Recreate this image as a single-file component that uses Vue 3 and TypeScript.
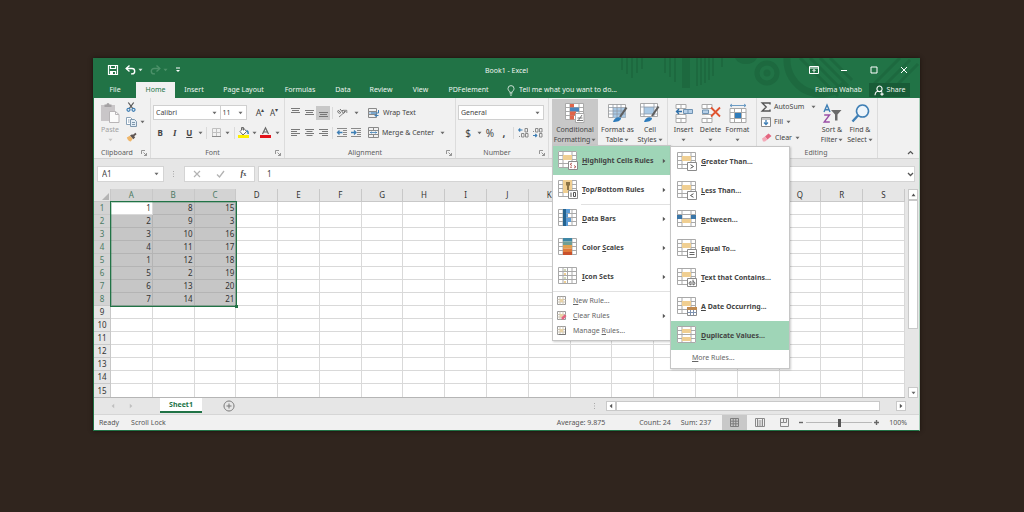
<script setup lang="ts">
import { h, ref, type FunctionalComponent } from 'vue'

interface Shape { d: string; f?: string; s?: string; w?: number; o?: number }
interface IconDef { w: number; h: number; p: Shape[] }
interface MenuEntry { icon: string; pre?: string; key: string; post: string; arrow?: boolean; active?: boolean; line?: boolean; small?: boolean }

const G = '#6b6b6b'
const L = '#a9a9a9'
const TAN = '#f0cf92'
const BLUE = '#3f7fb5'
const GRID = 'M.5.5h18v16h-18zM.5 4.5h18M.5 8.5h18M.5 12.5h18M5 .5v16M14 .5v16'
const base: Shape[] = [
  { d: 'M0 0h19v17H0z', f: '#fff' },
  { d: GRID, s: L },
  { d: 'M5 4h9v5H5z', f: TAN },
]
const badge: Shape = { d: 'M10.5 10.5h9v8h-9z', f: '#fff', s: '#8a8a8a' }
const tiny: Shape[] = [
  { d: 'M.5.5h8v8h-8z', f: '#fff', s: '#9a9a9a' },
  { d: 'M.5 3.5h8M.5 6h8M3 .5v8M6 .5v8', s: '#cfc6b4' },
  { d: 'M3 3h3v3H3z', f: '#e9d3a6' },
]

const icons: Record<string, IconDef> = {
  save: { w: 10, h: 10, p: [{ d: 'M.5.5h9v9h-9zM2.5.5v3h5v-3M2.5 9.5v-3h5v3', s: '#fff', w: 1.2 }, { d: 'M3 7h2v3H3z', f: '#fff' }] },
  undo: { w: 11, h: 10, p: [{ d: 'M1.5 3.5H7a2.6 2.6 0 0 1 0 5.4H6', s: '#fff', w: 1.4 }, { d: 'M4.5.5l-3.3 3 3.3 3', s: '#fff', w: 1.4 }] },
  redo: { w: 11, h: 10, p: [{ d: 'M9.5 3.5H4a2.6 2.6 0 0 0 0 5.4h1', s: '#4c9169', w: 1.4 }, { d: 'M6.5.5l3.3 3-3.3 3', s: '#4c9169', w: 1.4 }] },
  custom: { w: 6, h: 6, p: [{ d: 'M1 1h4', s: '#fff' }, { d: 'M1 3h4l-2 2z', f: '#fff' }] },
  ribbonopt: { w: 10, h: 8, p: [{ d: 'M.5.5h9v7h-9zM.5 2h9M5 6.5v-3M3.5 5L5 3.5 6.5 5', s: '#fff' }] },
  min: { w: 8, h: 8, p: [{ d: 'M1 4.5h6', s: '#fff' }] },
  max: { w: 8, h: 8, p: [{ d: 'M1 1h6v6H1z', s: '#fff' }] },
  close: { w: 8, h: 8, p: [{ d: 'M1 1l6 6M7 1L1 7', s: '#fff' }] },
  bulb: { w: 8, h: 11, p: [{ d: 'M2.7 7.3C2.6 6 1 5.500 1 3.600a3 3 0 0 1 6 0C7 5.500 5.400 6 5.300 7.300zM2.700 8.800h2.600M3.200 10.200h1.600', s: '#dcebe2', w: 0.9 }] },
  person: { w: 11, h: 11, p: [{ d: 'M5.500 1a2.600 2.800 0 1 0 .01 0zM1 10.200c.2-2.400 1.400-3.800 3-4M6.200 6.200c1 .2 1.500.5 2 1M8 7.500v3.200M6.400 9.100h3.200', s: '#fff', w: 1.1 }] },
  down: { w: 5, h: 4, p: [{ d: 'M.5.8h4L2.500 3.200z', f: '#6a6a6a' }] },
  downw: { w: 5, h: 4, p: [{ d: 'M.5.8h4L2.500 3.200z', f: '#dcebe2' }] },
  downd: { w: 5, h: 4, p: [{ d: 'M.5.8h4L2.500 3.200z', f: '#4c9169' }] },
  downl: { w: 5, h: 4, p: [{ d: 'M.5.8h4L2.500 3.200z', f: '#c4c4c4' }] },
  right: { w: 4, h: 6, p: [{ d: 'M.8.8v4.400L3.400 3z', f: '#555' }] },
  rightl: { w: 4, h: 6, p: [{ d: 'M.8.8v4.400L3.400 3z', f: '#c0c0c0' }] },
  left: { w: 4, h: 6, p: [{ d: 'M3.200.8v4.400L.6 3z', f: '#555' }] },
  leftl: { w: 4, h: 6, p: [{ d: 'M3.200.8v4.400L.6 3z', f: '#c0c0c0' }] },
  up: { w: 5, h: 4, p: [{ d: 'M.5 3.200h4L2.500.6z', f: '#555' }] },
  caret: { w: 7, h: 5, p: [{ d: 'M1 4l2.500-2.500L6 4', s: '#555', w: 1.2 }] },
  caretd: { w: 7, h: 5, p: [{ d: 'M1 1l2.500 2.500L6 1', s: '#555', w: 1.3 }] },
  launch: { w: 6, h: 6, p: [{ d: 'M.5 4V.5H4M2.500 2.500l3 3M5.500 3v2.500H3', s: '#8a8a8a', w: 0.9 }] },
  paste: { w: 20, h: 20, p: [{ d: 'M1 2h14v16H1z', f: '#c9c6c8' }, { d: 'M4.500 1.500h2a1.500 1.500 0 0 1 3 0h2V4h-7z', f: '#a5a2a4' }, { d: 'M9.500 8.500h6l3.500 3v8H9.500z', f: '#fbfbfb', s: '#b8b5b7' }, { d: 'M15.500 8.500v3H19', s: '#b8b5b7' }] },
  cut: { w: 10, h: 10, p: [{ d: 'M2.300.5l4.500 6.200M7.700.5L3.200 6.700', s: '#5a5a5a', w: 1.2 }, { d: 'M2.500 6.300a1.500 1.500 0 1 0 .01 0zM7.500 6.300a1.500 1.500 0 1 0 .01 0z', s: BLUE, w: 1.2 }] },
  copy: { w: 11, h: 10, p: [{ d: 'M.5.5h4l1.500 1.500v5.500h-5.500z', f: '#fff', s: '#8ba3b8' }, { d: 'M4.500 2.500h4l2 2v5h-6z', f: '#e3edf5', s: '#7f98ae' }, { d: 'M2 3h1.500M2 5h1.500M6 5.500h3M6 7.500h3', s: '#7f98ae' }] },
  brush: { w: 11, h: 9, p: [{ d: 'M.8 4.500l3-1.700 3 3-2 2.700c-1.600 0-3.200-1.200-4-4z', f: '#efb66a' }, { d: 'M4 2.500l2.200-1.200 3 3-1.800 2z', f: '#5f5654' }, { d: 'M7 3l3-2.500', s: '#5f5654', w: 1.800 }] },
  borders: { w: 9, h: 9, p: [{ d: 'M.5.5h8v8h-8zM.5 4.500h8M4.500.5v8', s: '#c0c0c0' }, { d: 'M0 8.500h9', s: '#8b8b8b' }] },
  bucket: { w: 11, h: 11, p: [{ d: 'M2 4.500L5.500 1l3 3.500L5 8z', f: '#fff', s: G }, { d: 'M3.500 3V.5h2v3', s: G }, { d: 'M8.500 3.500c2 1 1.800 2 1.700 3.500', s: BLUE, w: 1.500 }, { d: 'M0 8h11v3H0z', f: '#fdf100' }] },
  fontcolor: { w: 11, h: 11, p: [{ d: 'M2.500 7L5.500.8 8.500 7M3.600 5h3.800', s: '#666', w: 1.2 }, { d: 'M0 8h11v3H0z', f: '#e3121b' }] },
  atop: { w: 9, h: 9, p: [{ d: 'M0 .5h9M1 2.500h7M0 4.500h9', s: G, w: 0.9 }] },
  amid: { w: 9, h: 9, p: [{ d: 'M0 2.500h9M1 4.500h7M0 6.500h9', s: G, w: 0.9 }] },
  abot: { w: 9, h: 9, p: [{ d: 'M0 4.500h9M1 6.500h7M0 8.500h9', s: G, w: 0.9 }] },
  aleft: { w: 9, h: 9, p: [{ d: 'M0 1.500h9M0 3.500h6M0 5.500h9M0 7.500h6', s: G, w: 0.9 }] },
  acen: { w: 9, h: 9, p: [{ d: 'M0 1.500h9M1.500 3.500h6M0 5.500h9M1.500 7.500h6', s: G, w: 0.9 }] },
  aright: { w: 9, h: 9, p: [{ d: 'M0 1.500h9M3 3.500h6M0 5.500h9M3 7.500h6', s: G, w: 0.9 }] },
  orient: { w: 11, h: 10, p: [{ d: 'M2 9l7.500-6.500M7 2.300h2.800V5', s: '#8a8a8a' }, { d: 'M1.300 2.300a1.700 1.700 0 1 0 2.500 2.300zM3 1l3.500 4.300a1.500 1.500 0 1 0-1.500-2.500', s: G, w: 1 }] },
  indl: { w: 10, h: 9, p: [{ d: 'M0 .5h10M6 2.500h4M6 4.500h4M6 6.500h4M0 8.500h10', s: '#8a8a8a' }, { d: 'M5.500 4.500h-5M2.500 2.500l-2 2 2 2', s: BLUE, w: 1.3 }] },
  indr: { w: 10, h: 9, p: [{ d: 'M0 .5h10M6 2.500h4M6 4.500h4M6 6.500h4M0 8.500h10', s: '#8a8a8a' }, { d: 'M0 4.500h5M3 2.500l2 2-2 2', s: BLUE, w: 1.3 }] },
  wrap: { w: 12, h: 10, p: [{ d: 'M.5.5h8v9h-8zM.5 3.500h8M.5 6.500h8', s: '#8a8a8a' }, { d: 'M1 4h7v2H1z', f: '#b7cfe4' }, { d: 'M3 5h7.500V2M7 7.500h3.500M8.500 6L7 7.500 8.500 9', s: BLUE }] },
  merge: { w: 11, h: 11, p: [{ d: 'M.5.5h10v10H.5zM.5 3.500h10M.5 7.500h10M5.500.5v3M5.500 7.500v3', s: '#8a8a8a' }, { d: 'M2 5.500h7M3.500 4.500l-1 1 1 1M7.500 4.500l1 1-1 1', s: BLUE, w: 0.8 }] },
  decinc: { w: 11, h: 10, p: [{ d: 'M4.500 2H.8M2.200.5L.8 2l1.400 1.500', s: BLUE, w: 1.2 }, { d: 'M7 .5h2.500v3.500H7zM3.500 5.500H6V9H3.500zM7.500 5.500H10V9H7.500zM1 8.500h1', s: '#8a8a8a' }] },
  decdec: { w: 11, h: 10, p: [{ d: 'M1 7.500h3.700M3.300 6l1.400 1.500L3.300 9', s: BLUE, w: 1.2 }, { d: 'M3.500.5H6V4H3.500zM7.500.5H10V4H7.500zM7.500 5.500H10V9H7.500zM1 3.500h1', s: '#8a8a8a' }] },
  condfmt: { w: 20, h: 20, p: [{ d: 'M.5.5h18v16h-18z', f: '#fff', s: L }, { d: 'M.5 4.500h18M.5 8.500h18M.5 12.500h18M5 .5v16M14 .5v16', s: L }, { d: 'M5 1h4v3.500H5zM5 12.500h4v4H5z', f: '#e0654a' }, { d: 'M5 4.500h9v4H5z', f: '#4a86bd' }, { d: 'M5 8.500h6v4H5z', f: '#e0654a' }, { d: 'M10.500 10.500h8.500v9h-8.500z', f: '#fff', s: L }, { d: 'M12 17.500h6M12.500 15h5M13 18l4-6', s: '#777' }] },
  fmttable: { w: 20, h: 20, p: [{ d: 'M.5 1.500h17v13H.5z', f: '#fff', s: L }, { d: 'M5 5h12.500v9.500H5z', f: '#a9c9e5' }, { d: 'M.5 4.500h17M.5 8h17M.5 11h17M5 1.500v13M9 1.500v13M13 1.500v13', s: '#8f9ba6', w: 0.8 }, { d: 'M18.500 4.500L12 14', s: '#5f5f5f', w: 2.200 }, { d: 'M5 19c1-4 5-6 8-4 0 3-4 4-8 4z', f: '#2f7cbb' }] },
  cellstyle: { w: 20, h: 20, p: [{ d: 'M.5.5h17v13H.5z', f: '#fff', s: L }, { d: 'M4 4h10v7H4z', f: '#a9c9e5' }, { d: 'M.5 4h17M.5 11h17M4 .5v13M14 .5v13', s: '#8f9ba6', w: 0.8 }, { d: 'M18.500 3.500L12 13', s: '#5f5f5f', w: 2.200 }, { d: 'M4 19c1-4 5-6 8-4 0 3-4 4-8 4z', f: '#2f7cbb' }] },
  insert: { w: 18, h: 19, p: [{ d: 'M1 .5h10v4H1zM6 .5v4M1 14.500h10v4H1zM6 14.500v4M1 10.500h10v4', f: '#fff', s: L }, { d: 'M8.500 5.500h9v4h-9z', f: '#b7d0e8', s: '#6f93b3' }, { d: 'M13 5.500v4', s: '#6f93b3' }, { d: 'M7 7.500H1.500M4 5L1.500 7.500 4 10', s: '#2f6fa8', w: 1.400 }, { d: 'M1 10.500v4', s: L }] },
  del: { w: 20, h: 19, p: [{ d: 'M1 .5h10v4H1zM6 .5v4M1 14.500h10v4H1zM6 14.500v4M1 10.500h10v4', f: '#fff', s: L }, { d: 'M1.500 6h6v3.500h-6z', f: '#b7d0e8', s: '#6f93b3' }, { d: 'M10 3.500l9 9M19 3.500l-9 9', s: '#e0532f', w: 1.800 }] },
  format: { w: 18, h: 19, p: [{ d: 'M1 4.500h16v14H1zM1 8.500h16M1 14.500h16M5.500 4.500v14M12.500 4.500v14', f: '#fff', s: L }, { d: 'M6 9h6v5H6z', f: '#2f7cbb' }, { d: 'M1 1.500h16M3 0L1 1.500 3 3M15 0l2 1.500L15 3', s: '#5f93c0', w: 0.9 }] },
  sigma: { w: 10, h: 10, p: [{ d: 'M9 2.500V1H1.200l4 4-4 4H9V7.500', s: '#555', w: 1.400 }] },
  fill: { w: 10, h: 10, p: [{ d: 'M.5.5h9v9h-9z', f: '#fff', s: '#8a8a8a' }, { d: 'M.5 2h9', s: '#8a8a8a' }, { d: 'M5 3v4.500M3 5.500l2 2 2-2', s: BLUE, w: 1.300 }] },
  clear: { w: 11, h: 9, p: [{ d: 'M4 3.500L7.500.5l3 2.500L6.500 6.500z', f: '#e4657f' }, { d: 'M1 5.500l3-2L6.500 6.500 4 8.500H2z', f: '#f3a9b8' }] },
  sort: { w: 19, h: 19, p: [{ d: 'M1 8L4 1l3 7M2 5.700h4', s: '#3f7fb5', w: 1.400 }, { d: 'M1.200 11h5.300L1.200 18h5.600', s: '#9a4fa5', w: 1.400 }, { d: 'M8 6h10.500l-4 4.500v6h-2.500v-6z', f: '#6a6a6a' }] },
  find: { w: 19, h: 19, p: [{ d: 'M11.500 1a6 6 0 1 0 .01 0z', f: '#eef5fb', s: '#3f7fb5', w: 1.500 }, { d: 'M7 11.500L1.500 17.500', s: '#3f7fb5', w: 2.400 }] },
  cancel: { w: 8, h: 8, p: [{ d: 'M1 1l6 6M7 1L1 7', s: '#b3b3b3', w: 1.200 }] },
  check: { w: 9, h: 8, p: [{ d: 'M1 4.500l2.500 2.500L8 1', s: '#b3b3b3', w: 1.300 }] },
  plus: { w: 12, h: 12, p: [{ d: 'M6 1a5 5 0 1 0 .01 0zM3.500 6h5M6 3.500v5', s: '#777' }] },
  dots: { w: 3, h: 8, p: [{ d: 'M1 1h1v1H1zM1 3.500h1v1H1zM1 6h1v1H1z', f: '#aaa' }] },
  vnormal: { w: 9, h: 9, p: [{ d: 'M.5.5h8v8h-8zM.5 3.200h8M.5 5.800h8M3.200.5v8M5.800.5v8', s: '#7d7d7d' }] },
  vlayout: { w: 10, h: 9, p: [{ d: 'M.5.5h9v8h-9zM2.500 1v7M7.500 1v7M3.500 3h3M3.500 5h3M3.500 7h3', s: '#8a8a8a' }] },
  vbreak: { w: 9, h: 9, p: [{ d: 'M.5.5h8v8h-8zM3.500.5v4h3v-4M.5 4.500h3', s: '#8a8a8a' }] },
  zplus: { w: 7, h: 7, p: [{ d: 'M1 3.500h5M3.500 1v5', s: '#666', w: 1.400 }] },
  zminus: { w: 7, h: 7, p: [{ d: 'M1 3.500h4', s: '#666', w: 1.400 }] },
  highlight: { w: 20, h: 19, p: [...base, badge, { d: 'M14 12l-2 1.300 2 1.300M12 16.200h2M16 14.500l2 1.300-2 1.300', s: '#b0524e', w: 0.9 }] },
  gt: { w: 20, h: 19, p: [...base, badge, { d: 'M13.500 12.700l3 1.800-3 1.800', s: '#555' }] },
  lt: { w: 20, h: 19, p: [...base, badge, { d: 'M16.500 12.700l-3 1.800 3 1.800', s: '#555' }] },
  between: { w: 20, h: 19, p: [{ d: 'M0 0h19v17H0z', f: '#fff' }, { d: GRID, s: L }, { d: 'M0 5h5v4H0zM14 5h5v4h-5z', f: '#3a76a8' }, { d: 'M5 9h9v4H5z', f: TAN }] },
  eq: { w: 20, h: 19, p: [...base, badge, { d: 'M12.500 13.500h5M12.500 15.500h5', s: '#666' }] },
  ab: { w: 20, h: 19, p: [...base, badge, { d: 'M14 13.500v3.500M14 14a1.200 1.500 0 1 0 0 2.500M16 11.700v5.300M16 14a1.200 1.500 0 1 1 0 2.500', s: '#555', w: 0.9 }] },
  date: { w: 20, h: 19, p: [...base, badge, { d: 'M10 10h10v3H10z', f: '#c08a50' }, { d: 'M10.500 15.500h9M13.500 13v5.500M16.500 13v5.500', s: '#7f93b0' }] },
  dup: { w: 20, h: 19, p: [{ d: 'M0 0h19v17H0z', f: '#fff' }, { d: GRID, s: L }, { d: 'M5 3h9v4H5zM5 11h9v4H5z', f: TAN }] },
  top10: { w: 20, h: 19, p: [{ d: 'M0 0h19v17H0z', f: '#fff' }, { d: GRID, s: L }, { d: 'M5 0h9v13H5z', f: '#f0cf92' }, { d: 'M8 2h4v3l-1 1v4H9V6L8 5z', f: '#8a7244' }, badge, { d: 'M13 12.500v4.500M15.500 12.500h2v4h-2z', s: '#555' }] },
  bars: { w: 20, h: 19, p: [{ d: 'M0 0h19v17H0z', f: '#fff' }, { d: GRID, s: L }, { d: 'M5 0h3v17H5z', f: '#23628f' }, { d: 'M8 0h4v4H8zM8 4.500h2v4H8zM8 9h5v4H8zM8 13h2v4H8z', f: '#5b9bd5' }] },
  scales: { w: 20, h: 19, p: [{ d: 'M0 0h19v17H0z', f: '#fff' }, { d: GRID, s: L }, { d: 'M5 0h9v3.500H5z', f: '#3f87a5' }, { d: 'M5 3.500h9V7H5z', f: '#6f9e94' }, { d: 'M5 7h9v3.500H5z', f: '#e0a050' }, { d: 'M5 10.500h9V14H5z', f: '#e07a3a' }, { d: 'M5 14h9v3H5z', f: '#c9512c' }] },
  sets: { w: 20, h: 19, p: [{ d: 'M0 0h19v17H0z', f: '#fff' }, { d: GRID, s: L }, { d: 'M9.500.5v16', s: L }, { d: 'M6 2h2v2H6zM6 10h2v2H6z', f: '#cfd8b8' }, { d: 'M6 6h2v2H6zM6 14h2v2H6z', f: '#f0cf92' }] },
  newrule: { w: 9, h: 9, p: tiny },
  clearrule: { w: 10, h: 9, p: [...tiny, { d: 'M4 7l3.500-3.500L9.500 5 6 9z', f: '#e4657f' }] },
  managerule: { w: 9, h: 9, p: [...tiny, { d: 'M2 8.500h6.500V2', s: '#777' }] },
}

const Icon: FunctionalComponent<{ n: string }> = (props) => {
  const i = icons[props.n]
  return h('svg', { width: i.w, height: i.h, viewBox: `0 0 ${i.w} ${i.h}`, 'aria-hidden': 'true', style: { display: 'block', flex: 'none', overflow: 'visible' } },
    i.p.map((s) => h('path', { d: s.d, fill: s.f ?? 'none', stroke: s.s ?? 'none', 'stroke-width': s.w ?? 1, opacity: s.o ?? 1 })))
}
Icon.props = ['n']

const tabs = [
  { t: 'File', w: 42 }, { t: 'Home', w: 39, on: true }, { t: 'Insert', w: 38 }, { t: 'Page Layout', w: 61 },
  { t: 'Formulas', w: 52 }, { t: 'Data', w: 34 }, { t: 'Review', w: 42 }, { t: 'View', w: 37 }, { t: 'PDFelement', w: 59 },
]

const menu: MenuEntry[] = [
  { icon: 'highlight', key: 'H', post: 'ighlight Cells Rules', arrow: true, active: true },
  { icon: 'top10', key: 'T', post: 'op/Bottom Rules', arrow: true },
  { icon: 'bars', key: 'D', post: 'ata Bars', arrow: true, line: true },
  { icon: 'scales', pre: 'Color ', key: 'S', post: 'cales', arrow: true },
  { icon: 'sets', key: 'I', post: 'con Sets', arrow: true },
  { icon: 'newrule', key: 'N', post: 'ew Rule...', small: true, line: true },
  { icon: 'clearrule', key: 'C', post: 'lear Rules', small: true, arrow: true },
  { icon: 'managerule', pre: 'Manage ', key: 'R', post: 'ules...', small: true },
]
const submenu: MenuEntry[] = [
  { icon: 'gt', key: 'G', post: 'reater Than...' },
  { icon: 'lt', key: 'L', post: 'ess Than...' },
  { icon: 'between', key: 'B', post: 'etween...' },
  { icon: 'eq', key: 'E', post: 'qual To...' },
  { icon: 'ab', key: 'T', post: 'ext that Contains...' },
  { icon: 'date', key: 'A', post: ' Date Occurring...' },
  { icon: 'dup', key: 'D', post: 'uplicate Values...', active: true },
  { icon: '', key: 'M', post: 'ore Rules...', small: true },
]

const cols = 'ABCDEFGHIJKLMNOPQRS'.split('')
const values: number[][] = [[1, 8, 15], [2, 9, 3], [3, 10, 16], [4, 11, 17], [1, 12, 18], [5, 2, 19], [6, 13, 20], [7, 14, 21]]
const cell = (r: number, c: number): string => String(values[r - 1]?.[c] ?? '')
const selected = (r: number, c: number): boolean => r <= 8 && c < 3 && !(r === 1 && c === 0)

const font = ref('Calibri')
const size = ref('11')
const numberFormat = ref('General')
const formula = ref('1')
const nameBox = ref('A1')
const tell = ref('')
const zoom = ref(50)
</script>

<template>
  <main class="desk">
    <div class="window">
      <header class="head">
        <svg class="pattern" width="310" height="40" viewBox="0 0 310 40" aria-hidden="true">
          <g stroke="#1d693f" fill="none">
            <path d="M12 0v12M17 0v16M22 0v20M27 0v15M32 0v11M55 0v15M60 0v19M65 0v24" stroke-width="2" />
            <path d="M76 0v30" stroke-width="8" />
            <path d="M87 0v28M91 0v27M95 0v25M99 0v22M103 0v18M112 0v9" stroke-width="2" />
            <circle cx="157" cy="15" r="10" stroke-width="5" /><circle cx="157" cy="15" r="2" stroke-width="3" />
            <path d="M125 0a12 10 0 0 0 22 0" fill="#1d693f" stroke="none" />
            <path d="M177 0a34 34 0 0 0 58 26" stroke-width="7" />
            <path d="M190 0l38 38M200 0l34 34M210 0l28 28M220 0l22 22M268 34l32-32M278 36l30-30M262 28l28-28" stroke-width="3" />
          </g>
        </svg>
        <div class="title">
          <div class="quick">
            <button aria-label="Save"><Icon n="save" /></button>
            <button aria-label="Undo"><Icon n="undo" /><Icon n="downw" /></button>
            <button aria-label="Redo"><Icon n="redo" /><Icon n="downd" /></button>
            <button aria-label="Customize toolbar"><Icon n="custom" /></button>
          </div>
          <h1>Book1 - Excel</h1>
          <div class="wbtns">
            <button aria-label="Ribbon options"><Icon n="ribbonopt" /></button>
            <button aria-label="Minimize"><Icon n="min" /></button>
            <button aria-label="Maximize"><Icon n="max" /></button>
            <button aria-label="Close"><Icon n="close" /></button>
          </div>
        </div>
        <nav class="tabs">
          <button v-for="t in tabs" :key="t.t" class="tab" :class="{ on: t.on }" :style="{ width: t.w + 'px' }">{{ t.t }}</button>
          <label class="tell"><Icon n="bulb" /><input v-model="tell" aria-label="Tell me" placeholder="Tell me what you want to do..." /></label>
          <span class="user">Fatima Wahab</span>
          <button class="share"><Icon n="person" />Share</button>
        </nav>
      </header>

      <section class="ribbon">
        <div class="group clip">
          <div class="body">
            <button class="big paste"><Icon n="paste" /><span>Paste</span><Icon n="downl" /></button>
            <div class="stack">
              <button aria-label="Cut"><Icon n="cut" /></button>
              <button aria-label="Copy"><Icon n="copy" /><Icon n="down" /></button>
              <button aria-label="Format painter"><Icon n="brush" /></button>
            </div>
          </div>
          <footer><span>Clipboard</span><Icon n="launch" /></footer>
        </div>

        <div class="group fontg">
          <div class="rows">
            <div class="row">
              <span class="sel s1"><select v-model="font" aria-label="Font"><option>Calibri</option></select><Icon n="down" /></span>
              <span class="sel s2"><select v-model="size" aria-label="Font size"><option>11</option></select><Icon n="down" /></span>
              <button class="t grow">A<sup>▴</sup></button>
              <button class="t shrink">A<sup>▾</sup></button>
            </div>
            <div class="row">
              <button class="t"><b>B</b></button>
              <button class="t"><i>I</i></button>
              <button class="t"><b><u>U</u></b></button>
              <button class="a" aria-label="Underline options"><Icon n="down" /></button>
              <hr />
              <button class="t" aria-label="Borders"><Icon n="borders" /></button>
              <button class="a" aria-label="Border options"><Icon n="down" /></button>
              <hr />
              <button class="t" aria-label="Fill color"><Icon n="bucket" /></button>
              <button class="a" aria-label="Fill options"><Icon n="down" /></button>
              <button class="t" aria-label="Font color"><Icon n="fontcolor" /></button>
              <button class="a" aria-label="Color options"><Icon n="down" /></button>
            </div>
          </div>
          <footer><span>Font</span><Icon n="launch" /></footer>
        </div>

        <div class="group align">
          <div class="rows">
            <div class="row">
              <button class="t" aria-label="Top align"><Icon n="atop" /></button>
              <button class="t" aria-label="Middle align"><Icon n="amid" /></button>
              <button class="t pressed" aria-label="Bottom align"><Icon n="abot" /></button>
              <hr />
              <button class="t" aria-label="Orientation"><Icon n="orient" /></button>
              <button class="a wide" aria-label="Orientation options"><Icon n="down" /></button>
              <button class="lbl"><Icon n="wrap" />Wrap Text</button>
            </div>
            <div class="row">
              <button class="t" aria-label="Align left"><Icon n="aleft" /></button>
              <button class="t" aria-label="Center"><Icon n="acen" /></button>
              <button class="t" aria-label="Align right"><Icon n="aright" /></button>
              <hr />
              <button class="t" aria-label="Decrease indent"><Icon n="indl" /></button>
              <button class="t ind" aria-label="Increase indent"><Icon n="indr" /></button>
              <button class="lbl"><Icon n="merge" />Merge &amp; Center</button>
              <button class="a" aria-label="Merge options"><Icon n="down" /></button>
            </div>
          </div>
          <footer><span>Alignment</span><Icon n="launch" /></footer>
        </div>

        <div class="group num">
          <div class="rows">
            <div class="row">
              <span class="sel s3"><select v-model="numberFormat" aria-label="Number format"><option>General</option></select><Icon n="down" /></span>
            </div>
            <div class="row">
              <button class="t sym">$</button>
              <button class="a" aria-label="Currency options"><Icon n="down" /></button>
              <button class="t sym">%</button>
              <button class="t sym"><b>,</b></button>
              <hr />
              <button class="t" aria-label="Increase decimal"><Icon n="decinc" /></button>
              <button class="t" aria-label="Decrease decimal"><Icon n="decdec" /></button>
            </div>
          </div>
          <footer><span>Number</span><Icon n="launch" /></footer>
        </div>

        <div class="group styles">
          <div class="body">
            <div class="anchor">
              <button class="big cond pressed"><Icon n="condfmt" /><span>Conditional</span><span class="dd">Formatting<Icon n="down" /></span></button>
              <div class="menu" role="menu">
                <template v-for="m in menu" :key="m.post">
                  <hr v-if="m.line" :class="{ full: m.small }" />
                  <button class="item" role="menuitem" :class="{ active: m.active, small: m.small }">
                    <span class="ic"><Icon :n="m.icon" /></span>
                    <span>{{ m.pre }}<u>{{ m.key }}</u>{{ m.post }}</span>
                    <Icon v-if="m.arrow" class="arr" n="right" />
                  </button>
                </template>
                <div class="menu sub" role="menu">
                  <button v-for="m in submenu" :key="m.post" class="item" role="menuitem" :class="{ active: m.active, small: m.small }">
                    <span class="ic"><Icon v-if="m.icon" :n="m.icon" /></span>
                    <span><u>{{ m.key }}</u>{{ m.post }}</span>
                  </button>
                </div>
              </div>
            </div>
            <button class="big fat"><Icon n="fmttable" /><span>Format as</span><span class="dd">Table<Icon n="down" /></span></button>
            <button class="big cst"><Icon n="cellstyle" /><span>Cell</span><span class="dd">Styles<Icon n="down" /></span></button>
          </div>
        </div>

        <div class="group cells">
          <div class="body">
            <button class="big"><Icon n="insert" /><span>Insert</span><Icon n="down" /></button>
            <button class="big"><Icon n="del" /><span>Delete</span><Icon n="down" /></button>
            <button class="big"><Icon n="format" /><span>Format</span><Icon n="down" /></button>
          </div>
        </div>

        <div class="group edit">
          <div class="body">
            <div class="stack">
              <button><Icon n="sigma" />AutoSum<Icon class="push" n="down" /></button>
              <button><Icon n="fill" />Fill<Icon n="down" /></button>
              <button><Icon n="clear" />Clear<Icon n="down" /></button>
            </div>
            <button class="big"><Icon n="sort" /><span>Sort &amp;</span><span class="dd">Filter<Icon n="down" /></span></button>
            <button class="big"><Icon n="find" /><span>Find &amp;</span><span class="dd">Select<Icon n="down" /></span></button>
          </div>
          <footer><span>Editing</span></footer>
        </div>
        <button class="collapse" aria-label="Collapse ribbon"><Icon n="caret" /></button>
      </section>

      <section class="fbar">
        <label class="box name"><input v-model="nameBox" aria-label="Name box" /><Icon n="down" /></label>
        <Icon n="dots" />
        <div class="box ops">
          <button aria-label="Cancel"><Icon n="cancel" /></button>
          <button aria-label="Enter"><Icon n="check" /></button>
          <button class="fx" aria-label="Insert function"><i>f</i><sub>x</sub></button>
        </div>
        <label class="box val"><input v-model="formula" aria-label="Formula" /><Icon n="caretd" /></label>
      </section>

      <section class="sheet">
        <div class="gridwrap">
          <table>
            <thead>
              <tr>
                <th class="corner"><svg width="9" height="8" viewBox="0 0 9 8" aria-hidden="true"><path d="M8 0v7H1z" fill="#b4b4b4" /></svg></th>
                <th v-for="(c, i) in cols" :key="c" :class="{ hot: i < 3 }">{{ c }}</th>
              </tr>
            </thead>
            <tbody>
              <tr v-for="r in 15" :key="r">
                <th :class="{ hot: r < 9 }">{{ r }}</th>
                <td v-for="(c, i) in cols" :key="c" :class="{ picked: selected(r, i) }">{{ cell(r, i) }}</td>
              </tr>
            </tbody>
          </table>
          <div class="range"></div>
        </div>
        <div class="vbar">
          <button aria-label="Scroll up"><Icon n="up" /></button>
          <div class="thumb"></div>
          <button aria-label="Scroll down"><Icon n="down" /></button>
        </div>
      </section>

      <section class="sheets">
        <button aria-label="Previous sheet"><Icon n="leftl" /></button>
        <button aria-label="Next sheet"><Icon n="rightl" /></button>
        <button class="stab">Sheet1</button>
        <button aria-label="New sheet"><Icon n="plus" /></button>
        <div class="hbar">
          <Icon n="dots" />
          <button aria-label="Scroll left"><Icon n="left" /></button>
          <div class="thumb"></div>
          <button class="end" aria-label="Scroll right"><Icon n="right" /></button>
        </div>
      </section>

      <footer class="status">
        <span class="ready">Ready</span><span>Scroll Lock</span>
        <span class="avg">Average: 9.875</span><span class="cnt">Count: 24</span><span class="sum">Sum: 237</span>
        <button class="pressed" aria-label="Normal view"><Icon n="vnormal" /></button>
        <button aria-label="Page layout view"><Icon n="vlayout" /></button>
        <button aria-label="Page break view"><Icon n="vbreak" /></button>
        <button class="z" aria-label="Zoom out"><Icon n="zminus" /></button>
        <input v-model="zoom" type="range" aria-label="Zoom" />
        <button class="z" aria-label="Zoom in"><Icon n="zplus" /></button>
        <span class="pct">100%</span>
      </footer>
    </div>
  </main>
</template>

<style>
body { background: #30251e; }
</style>

<style scoped>
* { box-sizing: border-box; }
.desk { min-height: 100vh; background: #30251e; padding: 58px 104px 0 93px; font: 7px/10px "Noto Sans", "Open Sans", sans-serif; color: #444; }
button { display: flex; align-items: center; justify-content: center; padding: 0; border: 0; background: none; font: inherit; color: inherit; white-space: nowrap; }
input, select { font: inherit; color: inherit; border: 0; padding: 0; margin: 0; background: none; outline: 0; min-width: 0; appearance: none; }
hr { border: 0; margin: 0; }
.window { border: 1px solid #217346; border-top: 0; border-right-color: #a9cfba; background: #e6e6e6; box-shadow: 0 0 4px #1a120d; }

.head { position: relative; background: #217346; color: #eef5f0; margin: 0 -1px; padding: 0 1px; }
.pattern { position: absolute; right: 0; top: 0; }
.title { position: relative; display: flex; justify-content: space-between; height: 24px; padding-left: 14px; }
.title h1 { position: absolute; inset: 8px 0 auto 0; margin: 0; text-align: center; font-size: 7px; line-height: 10px; font-weight: 400; }
.quick, .wbtns { display: flex; position: relative; z-index: 1; }
.quick { gap: 7px; }
.quick button { gap: 2px; }
.wbtns button { width: 30px; }
.tabs { position: relative; display: flex; height: 16px; }
.tab.on { background: #f1f1f1; color: #217346; }
.tell { display: flex; align-items: center; gap: 4px; margin-left: 9px; }
.tell input { width: 130px; }
.tell input::placeholder { color: #eef5f0; opacity: 1; }
.user { margin-left: auto; align-self: center; }
.share { width: 41px; height: 14px; margin: 0 9px 0 7px; background: #185c37; gap: 2px; align-self: center; }

.ribbon { position: relative; z-index: 2; display: flex; height: 61px; background: #f1f1f1; border-bottom: 1px solid #d2d2d2; }
.group { flex: none; display: flex; flex-direction: column; justify-content: space-between; border-right: 1px solid #dcdcdc; padding: 1px 0 0; }
.group > footer { position: relative; display: flex; align-items: center; justify-content: center; height: 11px; color: #5e5e5e; padding-right: 10px; }
.group > footer svg { position: absolute; right: 3px; top: 3px; }
.clip { width: 57px; }
.fontg { width: 134px; }
.align { width: 171px; }
.num { width: 93px; }
.styles { width: 119px; }
.cells { width: 89px; }
.edit { width: 121px; }
.body { display: flex; height: 46px; }
.big { flex-direction: column; justify-content: flex-start; padding-top: 4px; line-height: 10px; }
.big > span:first-of-type { margin-top: 2px; }
.big > svg:last-child { margin-top: 3px; }
.dd { display: flex; align-items: center; gap: 1px; }
.pressed { background: #c8c8c8; }
.paste { width: 32px; color: #a0a0a0; }
.stack { display: flex; flex-direction: column; justify-content: space-between; }
.stack button { height: 15px; gap: 3px; justify-content: flex-start; }
.rows { display: flex; flex-direction: column; gap: 5px; padding: 6px 3px 0 2px; }
.row { display: flex; align-items: center; height: 15px; }
.row hr { width: 1px; height: 12px; background: #dadada; margin: 0 2px; }
.row .t { width: 14px; height: 14px; font-size: 8px; }
.row .a { width: 8px; height: 14px; }
.row .a.wide { width: 14px; margin-right: 5px; }
.row .ind { margin-right: 5px; }
.row .grow { margin-left: 6px; font-size: 9px; }
.row .sym { font-size: 10px; }
.row .sym:first-child { margin-left: 3px; }
.row sup { font-size: 6px; line-height: 6px; margin-top: -6px; }
.row i { font: italic 700 9px/10px "Liberation Serif", serif; }
.fontg .t { width: 15px; }
.align .rows { padding-left: 3px; }
.lbl { gap: 3px; }
.lbl + .a { margin-left: 4px; }
.sel { display: flex; align-items: center; height: 15px; background: #fff; border: 1px solid #d0d0d0; padding: 0 3px 0 2px; }
.sel select { flex: 1; }
.s1 { width: 72px; }
.s2 { width: 29px; margin-left: -1px; }
.s3 { width: 86px; }
.styles .body { padding-left: 3px; }
.anchor { position: relative; display: flex; }
.cond { width: 46px; }
.fat { width: 39px; }
.cst { width: 26px; }
.cells .body { padding-left: 2px; }
.cells .big { width: 27px; }
.cells .big, .edit .big { padding-top: 5px; }
.edit .body { padding-left: 4px; }
.edit .stack { width: 57px; }
.edit .push { margin-left: 4px; }
.edit .big { width: 28px; }
.edit > footer { padding-right: 2px; }
.collapse { position: absolute; right: 5px; bottom: 3px; }

.menu { position: absolute; left: 0; top: 46px; width: 119px; background: #fff; border: 1px solid #c6c6c6; padding: 0 0 2px; box-shadow: 1px 1px 2px #0003; }
.menu.sub { left: 117px; top: 0; width: 120px; }
.menu hr { height: 1px; background: #e1e1e1; margin: 0 0 -1px 28px; }
.menu hr.full { margin: 0 0 1px; }
.item { width: 100%; height: 29px; justify-content: flex-start; font-weight: 700; }
.item .ic { width: 29px; padding-left: 5px; }
.item .arr { margin-left: auto; margin-right: 4px; }
.item.active { background: #9fd5b7; }
.item.small { height: 15px; font-weight: 400; color: #666; }
.item.small .ic { width: 20px; padding-left: 4px; }
.sub .item .ic { width: 30px; padding-left: 6px; }
.sub .item.small { height: 16px; }
.sub .item.small .ic { width: 21px; }

.fbar { display: flex; align-items: center; height: 30px; padding: 0 4px 0 3px; }
.box { display: flex; align-items: center; height: 16px; background: #fff; border: 1px solid #d4d4d4; }
.name { width: 67px; padding: 0 4px; justify-content: space-between; margin-right: 8px; font-size: 8px; }
.name input { width: 40px; }
.ops { width: 71px; justify-content: space-around; margin-left: 9px; }
.fx { font: 8px/10px "Liberation Serif", serif; font-weight: 700; }
.fx sub { font-size: 6px; }
.val { flex: 1; margin-left: 3px; padding: 0 0 0 8px; font-size: 8px; }
.val input { flex: 1; }

.sheet { display: flex; }
.gridwrap { position: relative; flex: 1; border-bottom: 1px solid #b5b5b5; }
table { width: 100%; table-layout: fixed; border-collapse: separate; border-spacing: 0; background: #fff; font-size: 8px; line-height: 12px; color: #333; }
tr { height: 13px; }
th, td { height: 13px; padding: 0; border-right: 1px solid #d9d9d9; border-bottom: 1px solid #d9d9d9; overflow: hidden; }
th { background: #e6e6e6; font-weight: 400; text-align: center; border-color: #c8c8c8; }
th.corner { width: 17px; }
.corner svg { display: block; margin: 4px 0 0 7px; }
th.hot { background: #d3d3d3; color: #4b7a63; }
td { text-align: right; padding-right: 1px; }
td.picked { background: #c6c6c6; border-color: #b4b4b4; }
tbody tr:last-child > * { border-bottom: 0; }
.range { position: absolute; left: 16px; top: 12px; width: calc((100% - 17px) * 3 / 19 + 2px); height: 106px; border: 1px solid #217346; box-shadow: inset 0 0 0 1px #2173464d; }
.range::after { content: ""; position: absolute; right: -2px; bottom: -2px; width: 3px; height: 3px; background: #217346; }
.vbar { width: 14px; display: flex; flex-direction: column; padding: 0 1px 0 3px; }
.vbar button, .hbar button { width: 10px; height: 11px; background: #fff; border: 1px solid #c9c9c9; flex: none; }
.vbar .thumb { height: 129px; background: #fff; border: 1px solid #c9c9c9; }
.vbar button:last-child { margin-top: auto; }

.sheets { display: flex; height: 17px; padding-left: 10px; border-bottom: 1px solid #d6d6d6; }
.sheets > button { width: 18px; }
.sheets .stab { width: 42px; height: 15px; margin: 0 18px 0 20px; background: #fff; color: #217346; font-weight: 700; border-bottom: 2px solid #217346; }
.hbar { margin-left: auto; width: 40%; display: flex; align-items: center; padding-right: 13px; }
.hbar button { margin-left: 10px; height: 10px; }
.hbar .thumb { flex: 1; height: 10px; background: #fff; border: 1px solid #c9c9c9; }
.hbar button.end { margin-left: 16px; }

.status { display: flex; align-items: center; height: 15px; background: #f1f1f1; padding: 0 12px 0 5px; color: #555; }
.ready { margin-right: 12px; }
.avg { margin-left: auto; margin-right: 34px; }
.cnt { margin-right: 10px; }
.sum { margin-right: 11px; }
.status button { width: 25px; align-self: stretch; }
.status .z { width: 9px; }
.status .z:first-of-type { margin-left: 4px; }
.status input { width: 66px; height: 9px; background: linear-gradient(#b8b8b8, #b8b8b8) center / 100% 1px no-repeat; }
.status input::-webkit-slider-thumb { appearance: none; width: 3px; height: 8px; background: #555; }
.pct { margin-left: 8px; }
</style>
